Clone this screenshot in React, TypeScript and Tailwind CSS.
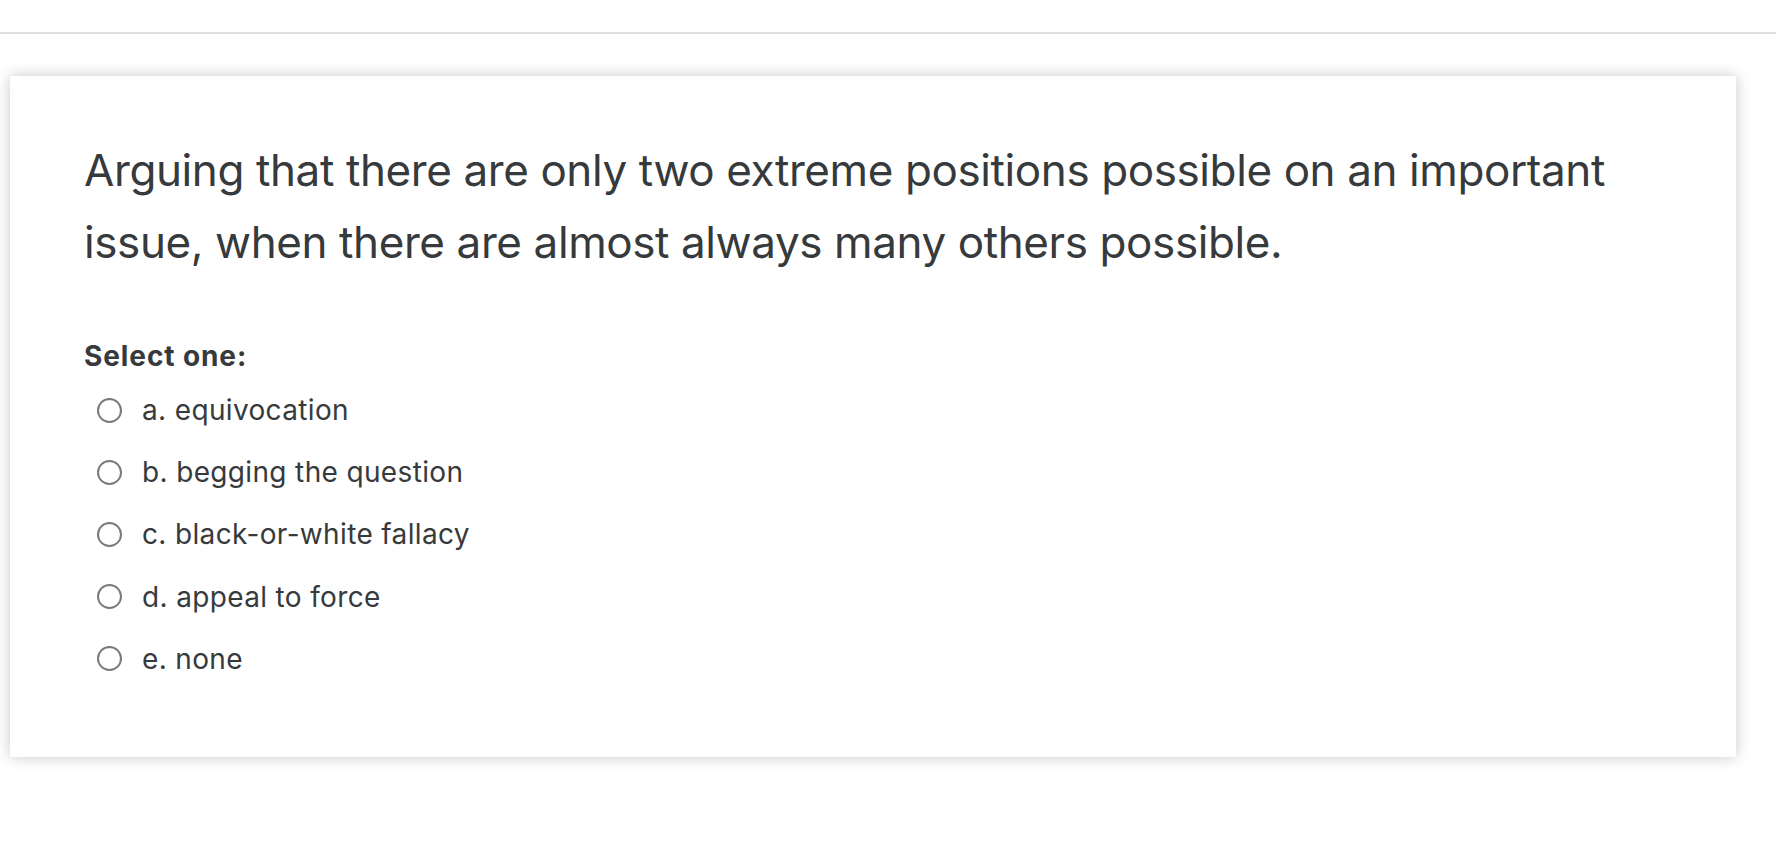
import React from "react";

const options = [
  "a. equivocation",
  "b. begging the question",
  "c. black-or-white fallacy",
  "d. appeal to force",
  "e. none",
];

export default function App() {
  return (
    <div
      className="min-h-[862px] w-[1776px] bg-white text-[#373a3c]"
      style={{ fontFamily: "Inter, 'Noto Sans', sans-serif" }}
    >
      <div className="h-[34px] border-b-2 border-[#dedede]" />
      <div className="ml-[10px] mt-[42px] w-[1726px] bg-white shadow-[0_0_14px_rgba(0,0,0,0.22)] pl-[74px] pr-[74px] pt-[58px] pb-[67px]">
        <p className="text-[44px] leading-[72px] font-normal tracking-[-0.4px]">
          Arguing that there are only two extreme positions possible on an important issue, when there are almost always many others possible.
        </p>
        <div className="mt-[58px] text-[28px] leading-[40px] font-bold tracking-[0.9px]">Select one:</div>
        <div className="mt-[3px] flex flex-col">
          {options.map((o) => (
            <div key={o} className="flex h-[62.2px] items-center pl-[13px]">
              <span className="block h-[25px] w-[25px] rounded-full border-2 border-[#7a7a7a] bg-white" />
              <span className="ml-[20px] text-[28px] leading-[40px] tracking-[0.35px]">{o}</span>
            </div>
          ))}
        </div>
      </div>
    </div>
  );
}
